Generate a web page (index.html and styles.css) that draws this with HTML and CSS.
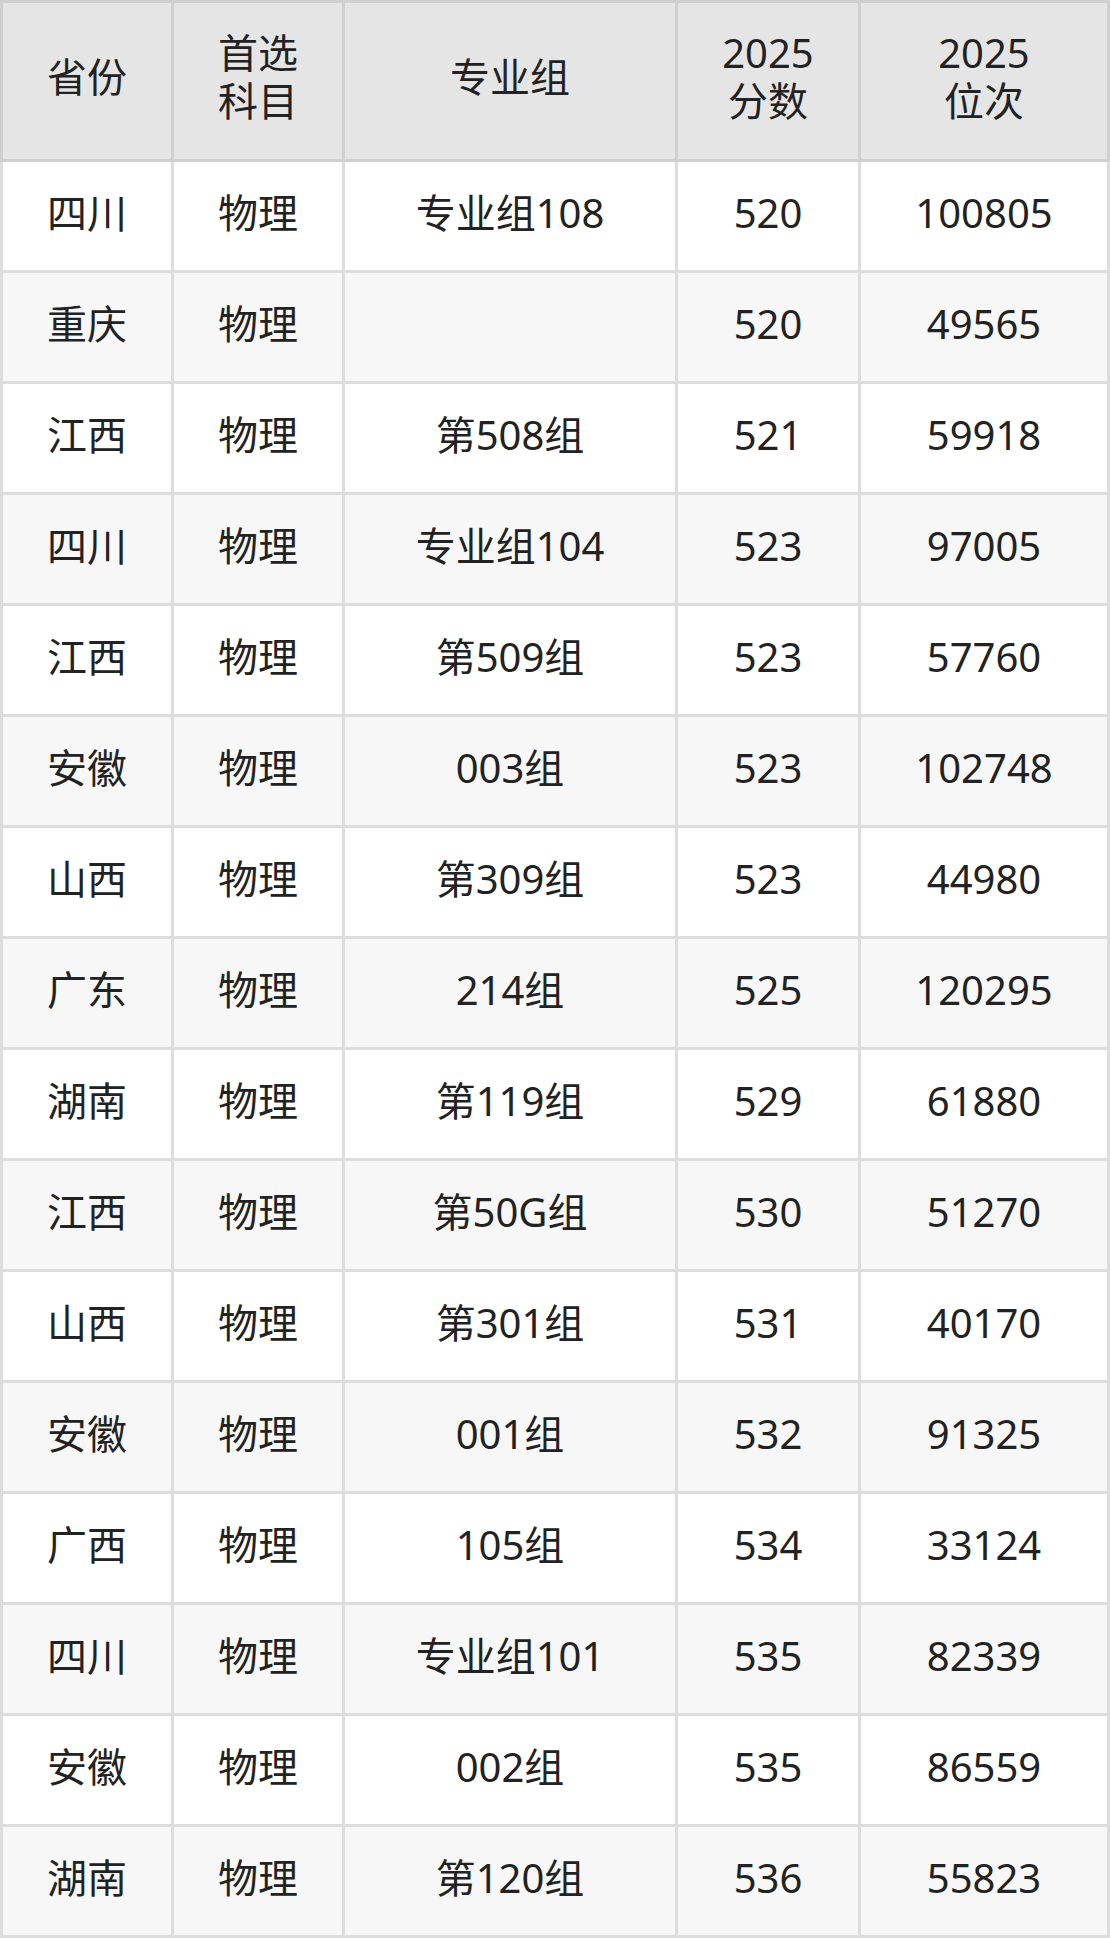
FILE: index.html
```html
<!DOCTYPE html>
<html lang="zh-CN">
<head>
<meta charset="utf-8">
<title>分数位次</title>
<link rel="stylesheet" href="styles.css">
</head>
<body>
<div class="table">
  <div class="head">
    <div class="th">省份</div>
    <div class="th">首选<br>科目</div>
    <div class="th">专业组</div>
    <div class="th">2025<br>分数</div>
    <div class="th">2025<br>位次</div>
  </div>
  <div class="body">
    <div class="td">四川</div><div class="td">物理</div><div class="td">专业组108</div><div class="td">520</div><div class="td">100805</div>
    <div class="td alt">重庆</div><div class="td alt">物理</div><div class="td alt"></div><div class="td alt">520</div><div class="td alt">49565</div>
    <div class="td">江西</div><div class="td">物理</div><div class="td">第508组</div><div class="td">521</div><div class="td">59918</div>
    <div class="td alt">四川</div><div class="td alt">物理</div><div class="td alt">专业组104</div><div class="td alt">523</div><div class="td alt">97005</div>
    <div class="td">江西</div><div class="td">物理</div><div class="td">第509组</div><div class="td">523</div><div class="td">57760</div>
    <div class="td alt">安徽</div><div class="td alt">物理</div><div class="td alt">003组</div><div class="td alt">523</div><div class="td alt">102748</div>
    <div class="td">山西</div><div class="td">物理</div><div class="td">第309组</div><div class="td">523</div><div class="td">44980</div>
    <div class="td alt">广东</div><div class="td alt">物理</div><div class="td alt">214组</div><div class="td alt">525</div><div class="td alt">120295</div>
    <div class="td">湖南</div><div class="td">物理</div><div class="td">第119组</div><div class="td">529</div><div class="td">61880</div>
    <div class="td alt">江西</div><div class="td alt">物理</div><div class="td alt">第50G组</div><div class="td alt">530</div><div class="td alt">51270</div>
    <div class="td">山西</div><div class="td">物理</div><div class="td">第301组</div><div class="td">531</div><div class="td">40170</div>
    <div class="td alt">安徽</div><div class="td alt">物理</div><div class="td alt">001组</div><div class="td alt">532</div><div class="td alt">91325</div>
    <div class="td">广西</div><div class="td">物理</div><div class="td">105组</div><div class="td">534</div><div class="td">33124</div>
    <div class="td alt">四川</div><div class="td alt">物理</div><div class="td alt">专业组101</div><div class="td alt">535</div><div class="td alt">82339</div>
    <div class="td">安徽</div><div class="td">物理</div><div class="td">002组</div><div class="td">535</div><div class="td">86559</div>
    <div class="td alt">湖南</div><div class="td alt">物理</div><div class="td alt">第120组</div><div class="td alt">536</div><div class="td alt">55823</div>
  </div>
</div>
</body>
</html>
```

FILE: styles.css
```css
html, body {
  margin: 0;
  padding: 0;
  background: #ffffff;
}

.table {
  width: 1110px;
  font-family: "Noto Sans", "Noto Sans CJK SC", sans-serif;
  font-size: 40px;
  color: #222222;
}

.head,
.body {
  display: grid;
  grid-template-columns: 168px 168px 330px 180px 246px;
  column-gap: 3px;
}

.head {
  background: #d0d0d0;
  padding: 3px;
}

.body {
  background: #dddddd;
  padding: 0 3px 3px;
  row-gap: 3px;
}

.th {
  height: 156px;
  background: #e5e5e5;
  display: flex;
  align-items: center;
  justify-content: center;
  text-align: center;
  line-height: 48px;
  padding-bottom: 8px;
  box-sizing: border-box;
}

.td {
  height: 108px;
  background: #ffffff;
  display: flex;
  align-items: center;
  justify-content: center;
  text-align: center;
  line-height: 48px;
  padding-bottom: 6px;
  box-sizing: border-box;
}

.td.alt {
  background: #f7f7f7;
}
```
